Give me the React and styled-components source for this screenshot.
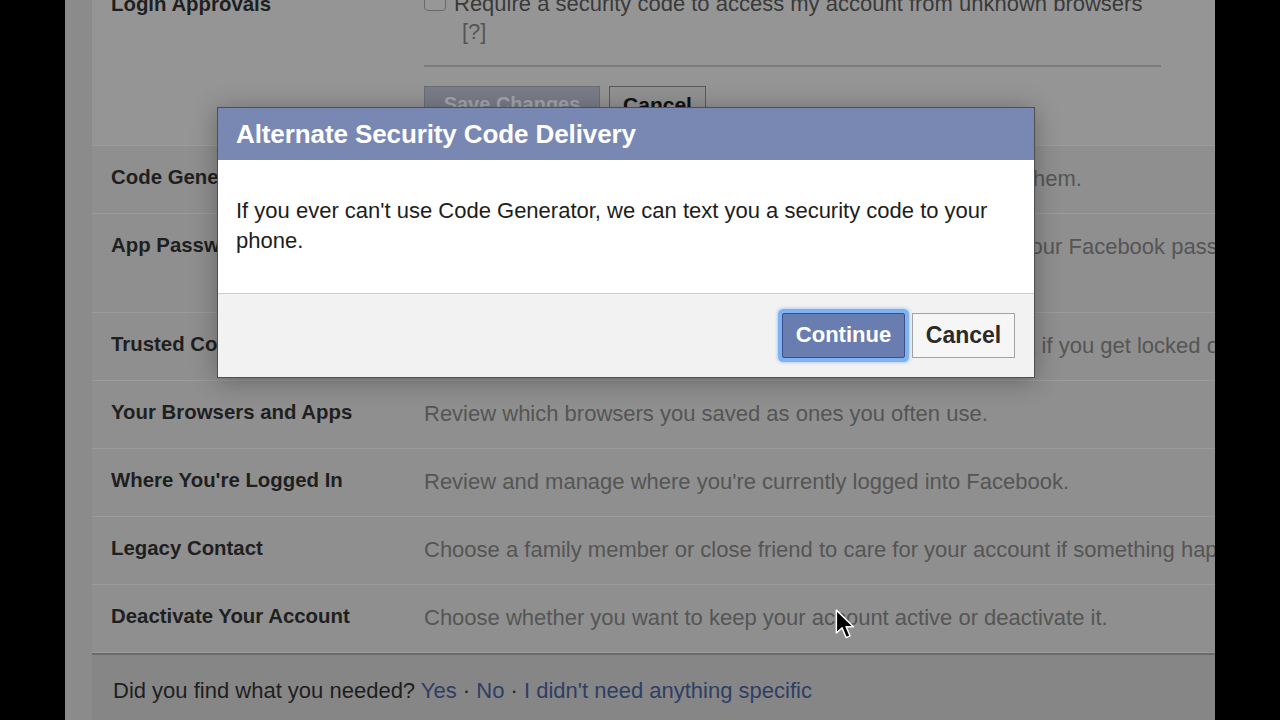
import React from "react";
import styled, { createGlobalStyle } from "styled-components";

const GlobalStyle = createGlobalStyle`
    html, body {
        margin: 0;
        padding: 0;
        background: #000;
    }
    body {
        font-family: "Liberation Sans", Arial, Helvetica, sans-serif;
    }
`

const rows = [
    { label: "Code Generator", desc: "Use your Facebook app to get security codes when you need them." },
    {
        label: "App Passwords",
        desc: "Use special passwords to log into your apps instead of using your Facebook password or",
        more: "Login Approvals codes.",
    },
    { label: "Trusted Contacts", desc: "Choose friends you may call to help get back into your account if you get locked out." },
    { label: "Your Browsers and Apps", desc: "Review which browsers you saved as ones you often use." },
    { label: "Where You're Logged In", desc: "Review and manage where you're currently logged into Facebook." },
    { label: "Legacy Contact", desc: "Choose a family member or close friend to care for your account if something happens to it." },
    { label: "Deactivate Your Account", desc: "Choose whether you want to keep your account active or deactivate it." },
]

const App = () => {
    return (
        <Frame>
            <GlobalStyle />
            <Page>
                <Content>
                    <Expanded>
                        <Label>Login Approvals</Label>
                        <Editor>
                            <CheckLine>
                                <CheckBox />
                                <span>Require a security code to access my account from unknown browsers</span>
                            </CheckLine>
                            <Help>[?]</Help>
                            <Rule />
                            <EditButtons>
                                <SaveButton>Save Changes</SaveButton>
                                <PlainButton>Cancel</PlainButton>
                            </EditButtons>
                        </Editor>
                    </Expanded>
                    {rows.map((row) => (
                        <Row key={row.label} tall={row.more ? "true" : "false"}>
                            <Label>{row.label}</Label>
                            <Desc>
                                {row.desc}
                                {row.more && <br />}
                                {row.more}
                            </Desc>
                        </Row>
                    ))}
                    <Feedback>
                        Did you find what you needed?{" "}
                        <FeedLink>Yes</FeedLink> · <FeedLink>No</FeedLink> ·{" "}
                        <FeedLink>I didn't need anything specific</FeedLink>
                    </Feedback>
                </Content>

                <Dialog>
                    <DialogHeader>Alternate Security Code Delivery</DialogHeader>
                    <DialogBody>
                        If you ever can't use Code Generator, we can text you a security code to your phone.
                    </DialogBody>
                    <DialogFooter>
                        <ContinueButton>Continue</ContinueButton>
                        <CancelButton>Cancel</CancelButton>
                    </DialogFooter>
                </Dialog>

                <Pointer viewBox="0 0 18 28" width="21" height="32">
                    <path
                        d="M1 1 L1 21 L6 16.5 L9.5 25 L13 23.5 L9.5 15.5 L16 15.5 Z"
                        fill="#000"
                        stroke="#fff"
                        strokeWidth="1.3"
                        strokeLinejoin="round"
                    />
                </Pointer>
            </Page>
        </Frame>
    )
}

const Frame = styled.div`
    width: 1280px;
    height: 720px;
    background: #000;
    display: flex;
    justify-content: center;
    overflow: hidden;
`
const Page = styled.div`
    position: relative;
    width: 1150px;
    height: 720px;
    overflow: hidden;
    background: #8b8b8b;
`
const Content = styled.div`
    margin-left: 27px;
    margin-top: -20px;
    width: 1320px;
`
const Expanded = styled.div`
    display: grid;
    grid-template-columns: 332px 1fr;
    background: #959595;
    border-bottom: 1px solid #9c9c9c;
    height: 166px;
    box-sizing: border-box;
    padding-top: 12px;
`
const Row = styled.div`
    display: grid;
    grid-template-columns: 332px 1fr;
    background: #8f8f8f;
    border-bottom: 1px solid #9b9b9b;
    height: ${({ tall }) => (tall === "true" ? "99px" : "68px")};
    box-sizing: border-box;
    padding-top: 19px;
`
const Label = styled.div`
    padding-left: 19px;
    font-size: 20.4px;
    line-height: 24px;
    font-weight: bold;
    color: #1f1f1f;
    white-space: nowrap;
`
const Desc = styled.div`
    font-size: 22px;
    line-height: 30px;
    margin-top: -1px;
    color: #555;
    white-space: nowrap;
`
const Editor = styled.div`
    font-size: 22px;
    color: #3a3a3a;
    width: 737px;
`
const CheckLine = styled.div`
    display: flex;
    align-items: center;
    gap: 8px;
    line-height: 24px;
    white-space: nowrap;
`
const CheckBox = styled.span`
    display: inline-block;
    flex-shrink: 0;
    width: 20px;
    height: 20px;
    margin-top: -8px;
    border: 1px solid #6a6a6a;
    border-radius: 4px;
    background: #979797;
`
const Help = styled.div`
    padding-left: 38px;
    line-height: 24px;
    margin-top: 4px;
    color: #555;
`
const Rule = styled.div`
    height: 2px;
    background: #7c7c7c;
    margin-top: 21px;
`
const EditButtons = styled.div`
    display: flex;
    gap: 9px;
    margin-top: 19px;
`
const SaveButton = styled.div`
    width: 176px;
    height: 36px;
    box-sizing: border-box;
    background: #7a7d88;
    border: 1px solid #6a6c78;
    color: #a3a6b0;
    font-size: 20px;
    font-weight: bold;
    padding-top: 6px;
    text-align: center;
    white-space: nowrap;
`
const PlainButton = styled.div`
    width: 97px;
    height: 36px;
    box-sizing: border-box;
    background: #929292;
    border: 1px solid #5a5a5a;
    color: #111;
    font-size: 21px;
    font-weight: bold;
    padding-top: 6px;
    text-align: center;
`
const Feedback = styled.div`
    background: #868686;
    border-top: 2px solid #6b6b6b;
    height: 100px;
    padding: 24px 0 0 21px;
    font-size: 22px;
    line-height: 24px;
    color: #1e1e1e;
`
const FeedLink = styled.span`
    color: #2f3e64;
`
const Dialog = styled.div`
    position: absolute;
    left: 152px;
    top: 107px;
    width: 818px;
    height: 271px;
    box-sizing: border-box;
    border: 1px solid #4f4f4f;
    background: #fff;
    box-shadow: 0 3px 24px rgba(0, 0, 0, 0.3);
    display: flex;
    flex-direction: column;
    z-index: 5;
`
const DialogHeader = styled.div`
    height: 52px;
    background: #7888b3;
    color: #fff;
    font-size: 26px;
    font-weight: bold;
    line-height: 52px;
    padding-left: 18px;
    letter-spacing: -0.1px;
`
const DialogBody = styled.div`
    height: 133px;
    box-sizing: border-box;
    padding: 36px 36px 0 18px;
    font-size: 22px;
    line-height: 30px;
    color: #1d1d1d;
`
const DialogFooter = styled.div`
    flex: 1;
    background: #f2f2f2;
    border-top: 1px solid #cfcfcf;
    display: flex;
    justify-content: flex-end;
    align-items: flex-start;
    gap: 7px;
    padding: 19px 19px 0 0;
`
const ContinueButton = styled.div`
    width: 123px;
    height: 45px;
    box-sizing: border-box;
    background: #6a7db0;
    border: 1px solid #3c4f84;
    color: #fff;
    font-size: 22px;
    font-weight: bold;
    line-height: 42px;
    text-align: center;
    border-radius: 2px;
    box-shadow: 0 0 0 4px #7fb2f2, 0 0 3px 5px rgba(120, 170, 240, 0.5);
`
const CancelButton = styled.div`
    width: 103px;
    height: 45px;
    box-sizing: border-box;
    background: #f6f6f6;
    border: 1px solid #a3a3a3;
    color: #2a2a2a;
    font-size: 23px;
    font-weight: bold;
    line-height: 43px;
    text-align: center;
`
const Pointer = styled.svg`
    position: absolute;
    left: 770px;
    top: 609px;
    z-index: 6;
`

export default App;
